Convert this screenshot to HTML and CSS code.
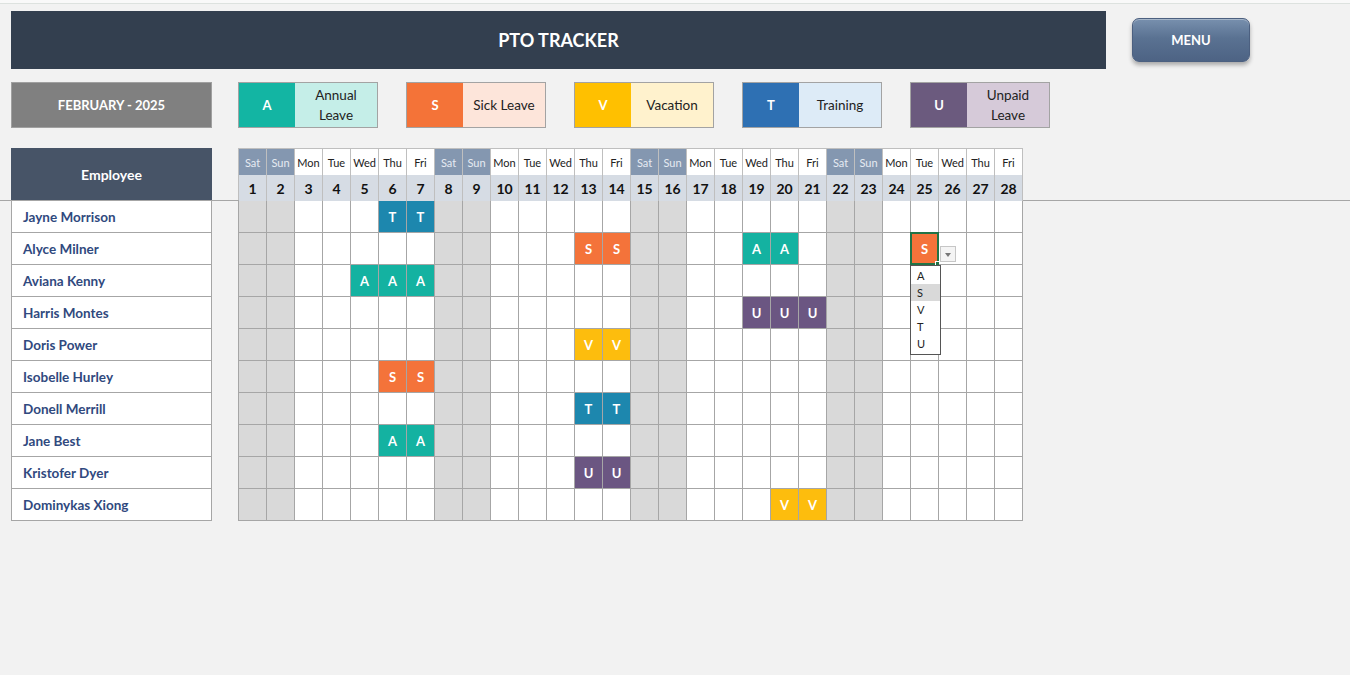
FILE: index.html
```html
<!DOCTYPE html>
<html lang="en">
<head>
    <meta charset="UTF-8">
    <meta name="viewport" content="width=device-width, initial-scale=1.0">
    <title>PTO Tracker</title>
    <link rel="stylesheet" href="styles.css">
</head>
<body>
    <div class="topbar"></div>

    <div class="header">
        <div class="title">PTO TRACKER</div>
        <button class="menu-btn">MENU</button>
    </div>

    <div class="legend">
        <div class="month">FEBRUARY - 2025</div>
        <div class="key key-a"><span class="code">A</span><span class="label">Annual<br>Leave</span></div>
        <div class="key key-s"><span class="code">S</span><span class="label">Sick Leave</span></div>
        <div class="key key-v"><span class="code">V</span><span class="label">Vacation</span></div>
        <div class="key key-t"><span class="code">T</span><span class="label">Training</span></div>
        <div class="key key-u"><span class="code">U</span><span class="label">Unpaid<br>Leave</span></div>
    </div>

    <div class="grid-head">
        <div class="emp-head">Employee</div>
        <div class="day-head" id="dayHead"></div>
    </div>

    <div class="grid-body">
        <div class="emp-list" id="empList"></div>
        <div class="day-body" id="dayBody"></div>
    </div>

    <script src="script.js"></script>
</body>
</html>
```

FILE: styles.css
```css
body {
    margin: 0;
    background-color: #f2f2f2;
    font-family: Lato, "Open Sans", sans-serif;
}

.topbar {
    height: 3px;
    background-color: #f9f9f9;
    border-bottom: 1px solid #dde2df;
}

.header {
    display: flex;
    align-items: flex-start;
    padding: 7px 0 0 11px;
}

.title {
    width: 1095px;
    height: 58px;
    background-color: #333f4f;
    color: #fff;
    font-weight: 700;
    font-size: 18px;
    display: flex;
    align-items: center;
    justify-content: center;
}

.menu-btn {
    margin: 7px 0 0 26px;
    width: 118px;
    height: 44px;
    border: 1px solid #4c6080;
    border-radius: 7px;
    background: linear-gradient(#7890ae, #5a7292 45%, #4d6384);
    box-shadow: inset 0 1px 0 rgba(255, 255, 255, 0.35), 0 3px 4px rgba(0, 0, 0, 0.3);
    color: #fff;
    font-family: inherit;
    font-weight: 700;
    font-size: 13px;
}

.legend {
    display: flex;
    margin: 13px 0 0 11px;
}

.month {
    width: 201px;
    height: 46px;
    box-sizing: border-box;
    border: 1px solid #a0a0a0;
    background-color: #808080;
    color: #fff;
    font-weight: 700;
    font-size: 13px;
    display: flex;
    align-items: center;
    justify-content: center;
}

.key {
    display: flex;
    width: 140px;
    height: 46px;
    box-sizing: border-box;
    border: 1px solid #a3a3a3;
    margin-left: 28px;
    font-size: 13.5px;
}
.month + .key {
    margin-left: 26px;
}

.key .code {
    width: 56px;
    display: flex;
    align-items: center;
    justify-content: center;
    color: #fff;
    font-weight: 700;
    font-size: 13px;
}
.key .label {
    flex: 1;
    display: flex;
    align-items: center;
    justify-content: center;
    text-align: center;
    line-height: 20px;
    color: #222;
}

.key-a .code { background-color: #13b5a3; }
.key-a .label { background-color: #c5eee8; }
.key-s .code { background-color: #f47338; }
.key-s .label { background-color: #fde5da; }
.key-v .code { background-color: #ffc000; }
.key-v .label { background-color: #fff2cd; }
.key-t .code { background-color: #2e70b3; }
.key-t .label { background-color: #ddebf7; }
.key-u .code { background-color: #6b5a7e; }
.key-u .label { background-color: #d6cad9; }

/* grid */
.grid-head {
    display: flex;
    margin-top: 20px;
    padding-left: 11px;
}

.emp-head {
    width: 201px;
    height: 52px;
    background-color: #475467;
    color: #fff;
    font-weight: 700;
    font-size: 14px;
    display: flex;
    align-items: center;
    justify-content: center;
}

.day-head {
    margin-left: 26px;
    display: grid;
    grid-template-columns: repeat(28, 28px);
    grid-template-rows: 26px 26px;
    border-left: 1px solid #bfbfbf;
    border-top: 1px solid #bfbfbf;
    box-sizing: border-box;
    height: 52px;
}

.dname, .dnum {
    box-sizing: border-box;
    border-right: 1px solid #bfbfbf;
    display: flex;
    align-items: center;
    justify-content: center;
}
.dname {
    background-color: #fff;
    font-size: 11px;
    color: #222;
}
.dname.weekend {
    background-color: #8497b0;
    color: #e6ebf2;
}
.dnum {
    background-color: #d6dce4;
    font-weight: 700;
    font-size: 14px;
    color: #111;
}

.grid-body {
    display: flex;
    border-top: 1px solid #a6a6a6;
    padding-left: 11px;
}

.emp-list {
    width: 201px;
}

.emp {
    height: 32px;
    box-sizing: border-box;
    background-color: #fff;
    border: 1px solid #a6a6a6;
    border-top: none;
    padding-left: 11px;
    display: flex;
    align-items: center;
    font-weight: 700;
    font-size: 13.5px;
    color: #30497e;
}

.day-body {
    margin-left: 26px;
    display: grid;
    grid-template-columns: repeat(28, 28px);
    grid-auto-rows: 32px;
    border-left: 1px solid #a6a6a6;
    align-self: flex-start;
}

.cell {
    position: relative;
    box-sizing: border-box;
    border-right: 1px solid #a6a6a6;
    border-bottom: 1px solid #a6a6a6;
    background-color: #fff;
    display: flex;
    align-items: center;
    justify-content: center;
    color: #fff;
    font-weight: 700;
    font-size: 13px;
}
.cell.weekend { background-color: #d9d9d9; }
.cell.A { background-color: #14b2a1; }
.cell.S { background-color: #f4733a; }
.cell.V { background-color: #fdbd0d; }
.cell.T { background-color: #1d87ae; }
.cell.U { background-color: #6b5682; }

.cell.selected::before {
    content: "";
    position: absolute;
    left: -1px;
    top: -1px;
    right: -1px;
    bottom: -1px;
    border: 2px solid #217346;
}
.cell.selected::after {
    content: "";
    position: absolute;
    right: -3px;
    bottom: -3px;
    width: 4px;
    height: 4px;
    background-color: #217346;
    border: 1px solid #fff;
}

.drop-btn {
    position: absolute;
    left: 29px;
    top: 13px;
    width: 16px;
    height: 16px;
    box-sizing: border-box;
    background-color: #f4f4f4;
    border: 1px solid #c6c6c6;
    z-index: 2;
}
.drop-btn::before {
    content: "";
    position: absolute;
    left: 4px;
    top: 6px;
    border-left: 3.5px solid transparent;
    border-right: 3.5px solid transparent;
    border-top: 4px solid #777;
}

.drop-list {
    position: absolute;
    left: -1px;
    top: 32px;
    width: 31px;
    box-sizing: border-box;
    background-color: #fff;
    border: 1px solid #555;
    padding: 1px 0 2px;
    z-index: 2;
}
.drop-list div {
    height: 17px;
    line-height: 17px;
    padding-left: 6px;
    font-size: 11px;
    font-weight: 400;
    color: #222;
    text-align: left;
}
.drop-list .hl {
    background-color: #d9d9d9;
}
```

FILE: script.js
```js
const dayNames = ['Sat', 'Sun', 'Mon', 'Tue', 'Wed', 'Thu', 'Fri'];

const employees = [
    ['Jayne Morrison', { 6: 'T', 7: 'T' }],
    ['Alyce Milner', { 13: 'S', 14: 'S', 19: 'A', 20: 'A', 25: 'S' }],
    ['Aviana Kenny', { 5: 'A', 6: 'A', 7: 'A' }],
    ['Harris Montes', { 19: 'U', 20: 'U', 21: 'U' }],
    ['Doris Power', { 13: 'V', 14: 'V' }],
    ['Isobelle Hurley', { 6: 'S', 7: 'S' }],
    ['Donell Merrill', { 13: 'T', 14: 'T' }],
    ['Jane Best', { 6: 'A', 7: 'A' }],
    ['Kristofer Dyer', { 13: 'U', 14: 'U' }],
    ['Dominykas Xiong', { 20: 'V', 21: 'V' }]
];

function isWeekend(day) {
    return (day - 1) % 7 < 2;
}

const head = document.getElementById('dayHead');
for (let d = 1; d <= 28; d++) {
    const el = document.createElement('div');
    el.className = 'dname' + (isWeekend(d) ? ' weekend' : '');
    el.textContent = dayNames[(d - 1) % 7];
    head.appendChild(el);
}
for (let d = 1; d <= 28; d++) {
    const el = document.createElement('div');
    el.className = 'dnum';
    el.textContent = d;
    head.appendChild(el);
}

const list = document.getElementById('empList');
const body = document.getElementById('dayBody');

employees.forEach(function (emp, row) {
    const name = document.createElement('div');
    name.className = 'emp';
    name.textContent = emp[0];
    list.appendChild(name);

    for (let d = 1; d <= 28; d++) {
        const cell = document.createElement('div');
        const code = emp[1][d];
        cell.className = 'cell' + (isWeekend(d) ? ' weekend' : '') + (code ? ' ' + code : '');
        if (code) cell.textContent = code;

        // open dropdown on the active cell
        if (row === 1 && d === 25) {
            cell.classList.add('selected');
            cell.innerHTML = 'S<span class="drop-btn"></span>' +
                '<div class="drop-list"><div>A</div><div class="hl">S</div><div>V</div><div>T</div><div>U</div></div>';
        }
        body.appendChild(cell);
    }
});
```
